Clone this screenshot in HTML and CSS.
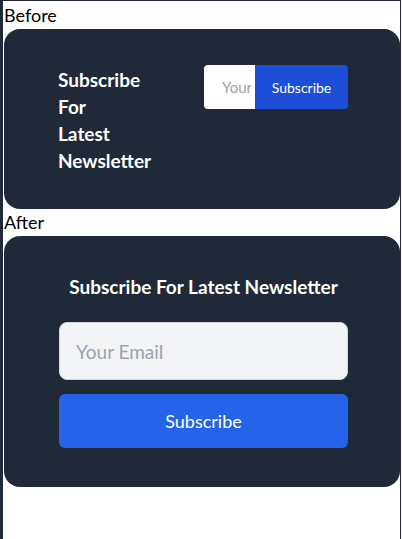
FILE: index.html
```html
<!DOCTYPE html>
<html lang="en">
<head>
    <meta charset="UTF-8">
    <meta name="viewport" content="width=device-width, initial-scale=1.0">
    <title>Newsletter</title>
    <link rel="stylesheet" href="styles.css">
</head>
<body>
    <div class="label">Before</div>
    <div class="card card-before">
        <h2 class="title-narrow">Subscribe For Latest Newsletter</h2>
        <form class="inline-form">
            <input class="inline-input" type="email" placeholder="Your Email">
            <button class="inline-btn" type="button">Subscribe</button>
        </form>
    </div>
    <div class="label label-after">After</div>
    <div class="card card-after">
        <h2 class="title-wide">Subscribe For Latest Newsletter</h2>
        <form class="stack-form">
            <input class="stack-input" type="email" placeholder="Your Email">
            <button class="stack-btn" type="button">Subscribe</button>
        </form>
    </div>
</body>
</html>
```

FILE: styles.css
```css
html {
    background: #ffffff;
}
body {
    font-family: Lato, "Noto Sans", sans-serif;
    margin: 0 1px 0 0;
    padding: 0 0 0 1px;
    border-top: 1px solid #1f2937;
    border-left: 3px solid #1f2937;
    border-right: 1px solid #1f2937;
    box-sizing: border-box;
    height: 539px;
    overflow: hidden;
}
.label {
    font-size: 18px;
    line-height: 28px;
    height: 28px;
    color: #000;
}
.label-after {
    height: 27px;
    line-height: 27px;
}
.card {
    background: #1f2937;
    border-radius: 16px;
    box-sizing: border-box;
}
.card-before {
    height: 180px;
    display: flex;
    justify-content: space-between;
    align-items: flex-start;
    padding: 36px 52px 0 54px;
}
.title-narrow {
    margin: 1px 0 0;
    width: 0;
    color: #fff;
    font-size: 19px;
    line-height: 27px;
    font-weight: 700;
}
.inline-form {
    display: flex;
    height: 44px;
    margin: 0;
}
.inline-input {
    width: 51px;
    box-sizing: border-box;
    border: none;
    border-radius: 4px 0 0 4px;
    padding: 0 4px 0 18px;
    font-family: inherit;
    font-size: 15px;
    background: #fff;
    outline: none;
}
.inline-input::placeholder {
    color: #9ca3af;
}
.inline-btn {
    width: 93px;
    border: none;
    border-radius: 0 4px 4px 0;
    background: #1d4ed8;
    color: #fff;
    font-family: inherit;
    font-size: 14px;
    padding: 0;
}
.card-after {
    height: 251px;
    padding: 37px 52px 0 55px;
}
.title-wide {
    margin: 0 0 21px;
    text-align: center;
    color: #fff;
    font-size: 19px;
    line-height: 28px;
    font-weight: 700;
}
.stack-form {
    display: flex;
    flex-direction: column;
    gap: 14px;
    margin: 0;
}
.stack-input {
    height: 58px;
    box-sizing: border-box;
    border: 1px solid #d1d5db;
    border-radius: 8px;
    background: #f3f4f6;
    padding: 0 16px;
    font-family: inherit;
    font-size: 19px;
    outline: none;
}
.stack-input::placeholder {
    color: #9ca3af;
}
.stack-btn {
    height: 54px;
    border: none;
    border-radius: 6px;
    background: #2563eb;
    color: #fff;
    font-family: inherit;
    font-size: 18px;
}
```
